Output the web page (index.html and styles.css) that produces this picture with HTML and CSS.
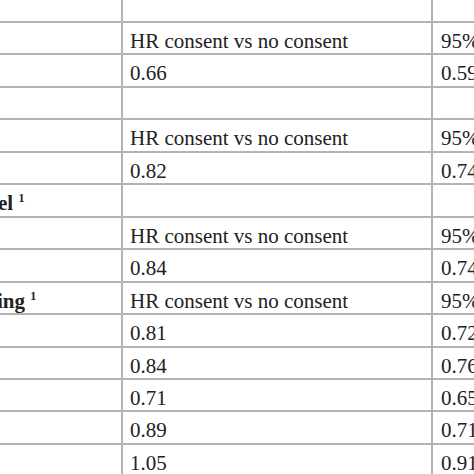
FILE: index.html
```html
<!DOCTYPE html>
<html>
<head>
<meta charset="utf-8">
<link rel="stylesheet" href="styles.css">
</head>
<body>
<div class="table">
  <div class="row head"><div class="cell c1"></div><div class="cell c2"></div><div class="cell c3"></div></div>
  <div class="row"><div class="cell c1"></div><div class="cell c2">HR consent vs no consent</div><div class="cell c3">95% CI</div></div>
  <div class="row"><div class="cell c1"></div><div class="cell c2">0.66</div><div class="cell c3">0.59–0.74</div></div>
  <div class="row"><div class="cell c1"></div><div class="cell c2"></div><div class="cell c3"></div></div>
  <div class="row"><div class="cell c1"></div><div class="cell c2">HR consent vs no consent</div><div class="cell c3">95% CI</div></div>
  <div class="row"><div class="cell c1"></div><div class="cell c2">0.82</div><div class="cell c3">0.74–0.91</div></div>
  <div class="row"><div class="cell c1 label cut-el">el <sup>1</sup></div><div class="cell c2"></div><div class="cell c3"></div></div>
  <div class="row"><div class="cell c1"></div><div class="cell c2">HR consent vs no consent</div><div class="cell c3">95% CI</div></div>
  <div class="row"><div class="cell c1"></div><div class="cell c2">0.84</div><div class="cell c3">0.74–0.95</div></div>
  <div class="row"><div class="cell c1 label cut-ing">ing <sup>1</sup></div><div class="cell c2">HR consent vs no consent</div><div class="cell c3">95% CI</div></div>
  <div class="row"><div class="cell c1"></div><div class="cell c2">0.81</div><div class="cell c3">0.72–0.91</div></div>
  <div class="row"><div class="cell c1"></div><div class="cell c2">0.84</div><div class="cell c3">0.76–0.93</div></div>
  <div class="row"><div class="cell c1"></div><div class="cell c2">0.71</div><div class="cell c3">0.65–0.78</div></div>
  <div class="row"><div class="cell c1"></div><div class="cell c2">0.89</div><div class="cell c3">0.71–1.12</div></div>
  <div class="row"><div class="cell c1"></div><div class="cell c2">1.05</div><div class="cell c3">0.91–1.21</div></div>
</div>
</body>
</html>
```

FILE: styles.css
```css
html, body {
  margin: 0;
  padding: 0;
  background: #ffffff;
  overflow: hidden;
}

.table {
  display: flex;
  flex-direction: column;
  width: 474px;
  font-family: "Liberation Serif", "Times New Roman", serif;
  font-size: 21px;
  color: #222222;
}

.row {
  display: grid;
  grid-template-columns: 121px 310px 1fr;
  height: 32.46px;
  box-sizing: border-box;
  border-bottom: 2px solid #b4b4b4;
  flex: none;
}

.row.head {
  height: 23px;
}

.cell {
  box-sizing: border-box;
  padding-top: 6px;
  line-height: 24px;
  white-space: nowrap;
  overflow: hidden;
}

.c2 {
  border-left: 2px solid #b4b4b4;
  padding-left: 7px;
}

.c3 {
  border-left: 2px solid #b4b4b4;
  padding-left: 8px;
}

.label {
  font-weight: bold;
}

.label sup {
  font-size: 12px;
  line-height: 0;
  vertical-align: 8px;
}

.cut-el {
  text-indent: -2px;
}

.cut-ing {
  text-indent: -3px;
}
```
